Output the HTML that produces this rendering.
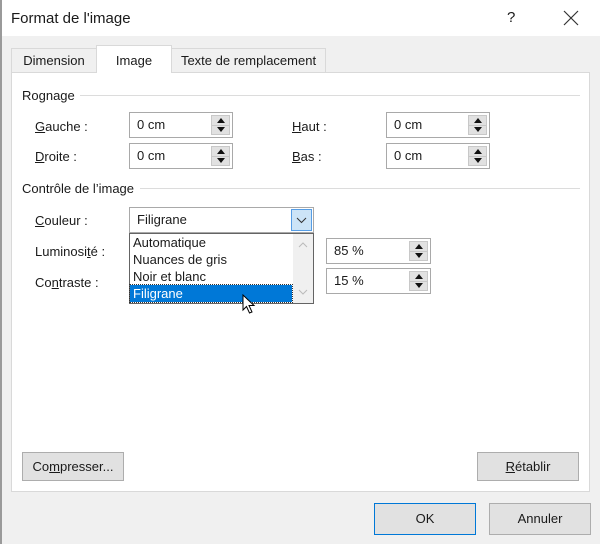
<!DOCTYPE html>
<html><head><style>
*{margin:0;padding:0;box-sizing:border-box}
body{width:600px;height:544px;background:#f0f0f0;font-family:"Liberation Sans",sans-serif;font-size:13px;color:#1a1a1a;position:relative;overflow:hidden}
.a{position:absolute}
.title{left:0;top:0;width:600px;height:36px;background:#fff}
.tab{border:1px solid #d9d9d9;border-bottom:none;background:#f0f0f0;text-align:center;line-height:24px;font-size:13px}
.panel{left:11px;top:72px;width:579px;height:420px;background:#fff;border:1px solid #d9d9d9}
.inp{border:1px solid #a9a9a9;background:#fff;padding-left:7px;line-height:24px;font-size:13px}
.spin{position:absolute;right:2px;top:2px;width:19px;height:20px;background:#e1e1e1;border:1px solid #c8c8c8}
.spin:before{content:"";position:absolute;left:5px;top:2px;border:4px solid transparent;border-bottom:5px solid #111;border-top:0}
.spin:after{content:"";position:absolute;left:5px;bottom:2px;border:4px solid transparent;border-top:5px solid #111;border-bottom:0}
.spin i{position:absolute;left:0;right:0;top:9px;height:1px;background:#c8c8c8}
.btn{background:#e1e1e1;border:1px solid #adadad;text-align:center;font-size:13px}
.line{height:1px;background:#dcdcdc}
u{text-decoration:underline}
</style></head><body>
<div class="a" style="left:0;top:0;width:2px;height:544px;background:#9a9a9a;z-index:3"></div>
<div class="a title"></div>
<div class="a" style="left:11px;top:10px;font-size:15px">Format de l'image</div>
<div class="a" style="left:507px;top:9px;font-size:15px">?</div>
<svg class="a" style="left:563px;top:10px" width="16" height="16"><path d="M1 1L15 15M15 1L1 15" stroke="#333" stroke-width="1.2"/></svg>
<div class="a panel"></div>
<div class="a tab" style="left:11px;top:48px;width:86px;height:24px">Dimension</div>
<div class="a tab" style="left:96px;top:45px;width:76px;height:28px;background:#fff;line-height:30px">Image</div>
<div class="a tab" style="left:171px;top:48px;width:155px;height:24px">Texte de remplacement</div>
<div class="a" style="left:22px;top:88px;font-size:13px">Rognage</div>
<div class="a line" style="left:80px;top:95px;width:500px"></div>
<div class="a" style="left:35px;top:119px"><u>G</u>auche :</div>
<div class="a" style="left:35px;top:149px"><u>D</u>roite :</div>
<div class="a" style="left:292px;top:119px"><u>H</u>aut :</div>
<div class="a" style="left:292px;top:149px"><u>B</u>as :</div>
<div class="a inp" style="left:129px;top:112px;width:104px;height:26px">0 cm<div class="spin"><i></i></div></div>
<div class="a inp" style="left:129px;top:143px;width:104px;height:26px">0 cm<div class="spin"><i></i></div></div>
<div class="a inp" style="left:386px;top:112px;width:104px;height:26px">0 cm<div class="spin"><i></i></div></div>
<div class="a inp" style="left:386px;top:143px;width:104px;height:26px">0 cm<div class="spin"><i></i></div></div>
<div class="a" style="left:22px;top:181px;font-size:13px">Contrôle de l’image</div>
<div class="a line" style="left:140px;top:188px;width:440px"></div>
<div class="a" style="left:35px;top:213px"><u>C</u>ouleur :</div>
<div class="a" style="left:35px;top:244px">Luminosi<u>t</u>é :</div>
<div class="a" style="left:35px;top:275px">Co<u>n</u>traste :</div>
<div class="a inp" style="left:129px;top:207px;width:185px;height:26px">Filigrane
<div class="a" style="right:1px;top:1px;width:21px;height:22px;background:#cce4f7;border:1px solid #569de5"></div>
<svg class="a" style="right:6px;top:9px" width="11" height="7"><path d="M1 1L5.5 5.5L10 1" stroke="#333" fill="none"/></svg></div>
<div class="a" style="left:129px;top:233px;width:185px;height:71px;background:#fff;border:1px solid #646464;font-size:13px;line-height:17px">
<div style="padding-left:3px">Automatique</div><div style="padding-left:3px">Nuances de gris</div><div style="padding-left:3px">Noir et blanc</div>
<div style="padding-left:3px;background:#0078d7;color:#fff;width:162px;outline:1px dotted #333">Filigrane</div>
<div class="a" style="right:0;top:0;width:20px;height:69px;background:#f0f0f0"></div>
<svg class="a" style="right:5px;top:8px" width="10" height="6"><path d="M1 5L5 1L9 5" stroke="#bbb" fill="none"/></svg>
<svg class="a" style="right:5px;top:55px" width="10" height="6"><path d="M1 1L5 5L9 1" stroke="#bbb" fill="none"/></svg>
</div>
<svg class="a" style="left:242px;top:294px;z-index:4" width="16" height="22"><path d="M1 1L1 16L4.5 12.5L7.5 19L10 18L7 11.5L12 11.5Z" fill="#fff" stroke="#000"/></svg>
<div class="a inp" style="left:326px;top:238px;width:105px;height:26px">85 %<div class="spin"><i></i></div></div>
<div class="a inp" style="left:326px;top:268px;width:105px;height:26px">15 %<div class="spin"><i></i></div></div>
<div class="a btn" style="left:22px;top:452px;width:102px;height:29px;line-height:27px">Co<u>m</u>presser...</div>
<div class="a btn" style="left:477px;top:452px;width:102px;height:29px;line-height:27px"><u>R</u>établir</div>
<div class="a btn" style="left:374px;top:503px;width:102px;height:32px;line-height:30px;border:1px solid #0078d7">OK</div>
<div class="a btn" style="left:489px;top:503px;width:102px;height:32px;line-height:30px">Annuler</div>
</body></html>
